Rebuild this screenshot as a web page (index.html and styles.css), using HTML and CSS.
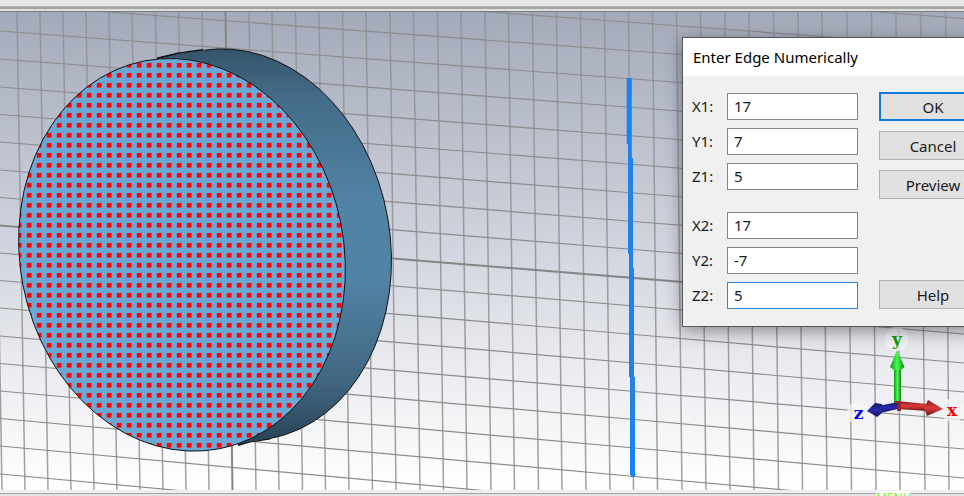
FILE: index.html
```html
<!DOCTYPE html>
<html lang="en">
<head>
<meta charset="utf-8">
<title>Enter Edge Numerically</title>
<link rel="stylesheet" href="styles.css">
</head>
<body>
<div class="app">
  <div class="toolbar-edge"></div>
  <main class="viewport">
    <svg class="scene" viewBox="0 12 964 478" preserveAspectRatio="xMinYMin slice" role="img" aria-label="3D view of a cylinder and an edge on the working plane">
      <defs>
        <pattern id="pick" x="4" y="0" width="10" height="10" patternUnits="userSpaceOnUse">
          <rect width="10" height="10" fill="#6ba8d4"/>
          <rect x="2" y="3" width="6" height="5" fill="#8d87ac"/>
          <rect x="3" y="3" width="4" height="4" fill="#ff0000"/>
          <rect x="3" y="7" width="4" height="1" fill="#d63a4c"/>
          <rect x="7" y="3" width="1" height="4" fill="#c04a66"/>
        </pattern>
        <linearGradient id="side" gradientUnits="userSpaceOnUse" x1="190" y1="48" x2="190" y2="441">
          <stop offset="0" stop-color="#35536a"/>
          <stop offset=".12" stop-color="#436b87"/>
          <stop offset=".4" stop-color="#5183a5"/>
          <stop offset=".6" stop-color="#5082a4"/>
          <stop offset=".85" stop-color="#416680"/>
          <stop offset="1" stop-color="#2a4456"/>
        </linearGradient>
        <linearGradient id="green"><stop offset="0" stop-color="#17911c"/><stop offset=".5" stop-color="#43ff4a"/><stop offset="1" stop-color="#118016"/></linearGradient>
        <linearGradient id="red" x1="0" y1="0" x2="0" y2="1"><stop offset="0" stop-color="#7c1c1c"/><stop offset=".5" stop-color="#e03a3a"/><stop offset="1" stop-color="#701616"/></linearGradient>
        <linearGradient id="blue" x1="0" y1="0" x2="0" y2="1"><stop offset="0" stop-color="#17175e"/><stop offset=".5" stop-color="#2929b0"/><stop offset="1" stop-color="#13135c"/></linearGradient>
      </defs>
      <g class="grid">
        <path class="grid-v" d="M-6 12 2 490M17 12 25 490M40 12 48 490M63 12 71 490M86 12 94 490M109 12 117 490M132 12 140 490M155.500 12 163 490M178.500 12 186 490M202 12 209 490M249 12 256 490M272 12 279 490M295.500 12 302.500 490M319 12 325.500 490M342.500 12 349 490M366 12 372.500 490M390 12 396 490M413.500 12 420 490M437.500 12 443.500 490M461 12 467 490M485 12 491 490M508.500 12 514.500 490M532.500 12 538.500 490M556.500 12 562 490M580.500 12 586 490M604.500 12 610 490M628.500 12 633.500 490M652.500 12 657.500 490M676.500 12 682 490M700.500 12 706 490M725 12 730 490M749 12 754 490M773.500 12 778.500 490M798 12 802.500 490M822 12 827 490M847 12 851.500 490M871.500 12 876 490M896 12 900 490M920.500 12 925 490M945.500 12 949 490"/>
        <path class="grid-h" d="M0-24 640 23 964 47M640-6 964 18.500M0 4 640 51.500 964 76M0 31 640 79.500 964 104M0 59 640 108 964 133M0 87 640 136.500 964 162M0 114.500 640 165 964 191M0 142 640 193.500 964 219M0 170 640 222 964 248M0 197.500 640 250 964 277M0 253 640 306.500 964 334M0 280.500 640 335 964 363M0 308 640 363.500 964 392M0 336 640 392 964 420M0 363.500 640 420 964 449M0 391 640 448.500 964 478M0 418.500 640 477 964 506M0 446 640 505M0 474 640 533"/>
        <path class="grid-axis" d="M225.500 12 232.500 490M0 225.500 393 258.500 640 278.500 964 305.500"/>
      </g>
      <g class="cylinder">
        <path class="outline" d="M157 58.500 178 53.500 203 50M238 445 250 441.500 270 438.500"/>
        <path class="side" d="M201.800 50.500A197 155.500 80 0 1 270.200 438.500A197 155.500 80 0 1 201.800 50.500Z"/>
        <path fill="url(#side)" d="M155 60 180 53.500 206 50 250 250 270 438 240 444Z"/>
        <path class="face" d="M144.300 60.900A197.500 162 79 0 1 219.700 448.700A197.500 162 79 0 1 144.300 60.900Z"/>
      </g>
      <path class="edge" d="M626.700 78H631.800V158H633V268H634V377H635V474H636V475H635V477H631V475H630V377H629V254H628V144H626.700Z"/>
      <path class="edge-grid" d="M629 78 633.500 476"/>
      <g class="axes">
        <circle class="halo" cx="896.500" cy="339" r="12"/><circle class="halo" cx="859" cy="413" r="12"/><circle class="halo" cx="953" cy="410" r="12"/>
        <path fill="url(#green)" d="M894 367H901V403H894Z"/>
        <path fill="url(#green)" d="M897 350 904.500 367 901 370H894L890 367Z"/>
        <path fill="url(#red)" d="M897 401 927 404V411L897 409Z"/>
        <path fill="url(#red)" d="M928 400 943 409 927 416 924 408Z"/>
        <path fill="url(#blue)" d="M898 402V409L880 413 878 406Z"/>
        <path fill="url(#blue)" d="M867 411 875 403 882 404V413L877 417Z"/>
        <path fill="#9e2424" d="M894 401H901V411H897L898 404Z"/>
        <text x="897" y="345" fill="#09a009">y</text><text x="858.500" y="419" fill="#0000ff">z</text><text x="952" y="416" fill="#ff0000">x</text>
      </g>
    </svg>
  </main>
  <footer class="status-edge"><span class="menu-mark">MENU</span></footer>
  <form class="dialog" role="dialog" aria-labelledby="dialog-title">
    <h1 class="dialog-title" id="dialog-title">Enter Edge Numerically</h1>
    <div class="dialog-body">
      <div class="fields">
        <div class="group">
          <label for="x1">X1:</label><input id="x1" type="text" value="17">
          <label for="y1">Y1:</label><input id="y1" type="text" value="7">
          <label for="z1">Z1:</label><input id="z1" type="text" value="5">
        </div>
        <div class="group">
          <label for="x2">X2:</label><input id="x2" type="text" value="17">
          <label for="y2">Y2:</label><input id="y2" type="text" value="-7">
          <label for="z2">Z2:</label><input id="z2" class="active" type="text" value="5">
        </div>
      </div>
      <div class="actions">
        <button class="default" type="submit">OK</button>
        <button type="button">Cancel</button>
        <button type="button">Preview</button>
        <button class="help" type="button">Help</button>
      </div>
    </div>
  </form>
</div>
</body>
</html>
```
FILE: styles.css
```css
* { box-sizing: border-box; }

body {
  margin: 0;
  overflow: hidden;
  font-family: "Noto Sans", sans-serif;
  font-size: 15px;
  color: #1a1a1a;
}

.app {
  position: relative;
  display: flex;
  flex-direction: column;
  height: 100vh;
  overflow: hidden;
  background: #e6e6e6;
}

.toolbar-edge {
  flex: none;
  height: 12px;
  background: linear-gradient(#e6e6e6 6px, #b4b4b4 6px 7px, #a6a6a6 7px 9px, #dededc 9px 11px, #7c7f80 11px);
}

.viewport {
  flex: 1;
  min-height: 0;
  background: linear-gradient(#a4aaba, #d2d5df 50%, #ebecf0 75%, #ffffff);
}

.scene { display: block; width: 100%; height: 100%; }
.scene path { stroke-linejoin: round; }

.grid path { fill: none; }
.grid-v { stroke: #909090; stroke-width: 1.5; opacity: .85; }
.grid-h { stroke: #8b8b8b; stroke-width: 1.2; }
.grid-axis { stroke: #858585; stroke-width: 2; }

.outline { fill: none; stroke: #111111; stroke-width: 2; }
.side { fill: url(#side); stroke: #111111; }
.face { fill: url(#pick); stroke: #111111; }

.edge { fill: #1683f5; }
.edge-grid { fill: none; stroke: #3d7ec4; }

.halo { fill: #f5f5f7; opacity: .75; }
.axes text {
  font-family: "DejaVu Serif", serif;
  font-size: 17px;
  font-weight: bold;
  text-anchor: middle;
}

.status-edge {
  position: relative;
  flex: none;
  height: 6px;
  background: linear-gradient(#eeeeee 3px, #a6a6a6 3px 4px, #e2e2e2 4px);
}

.menu-mark {
  position: absolute;
  top: 1px;
  left: 876px;
  font-size: 12px;
  line-height: 14px;
  color: #7cf03c;
  background: #ffffff;
}

.dialog {
  position: absolute;
  top: 37px;
  left: 682px;
  width: 320px;
  border: 1px solid #55565a;
  background: #f0f0f0;
  box-shadow: 0 4px 16px rgba(0, 0, 0, .4);
}

.dialog-title {
  margin: 0;
  padding: 0 10px;
  font-size: 15px;
  font-weight: normal;
  line-height: 38px;
  color: #000000;
  background: #ffffff;
}

.dialog-body {
  display: flex;
  gap: 21px;
  padding: 16px 14px 17px 9px;
}

.fields { display: flex; flex-direction: column; gap: 22px; padding-top: 1px; }

.group {
  display: grid;
  grid-template-columns: 35px 131px;
  gap: 8px 0;
  align-items: center;
}

.group label { line-height: 27px; }

.group input {
  width: 100%;
  height: 27px;
  padding: 0 6px 2px;
  border: 1px solid #858585;
  outline: 0;
  font: inherit;
  color: inherit;
  background: #ffffff;
}

.group input.active { border-color: #2b88d8; }

.actions { display: flex; flex: 1; flex-direction: column; gap: 10px; }

.actions button {
  height: 29px;
  padding: 0;
  border: 1px solid #b0b0b0;
  font: inherit;
  color: inherit;
  background: #e1e1e1;
}

.actions .default { border: 2px solid #0f7bd8; }
.actions .help { margin-top: auto; }
```
